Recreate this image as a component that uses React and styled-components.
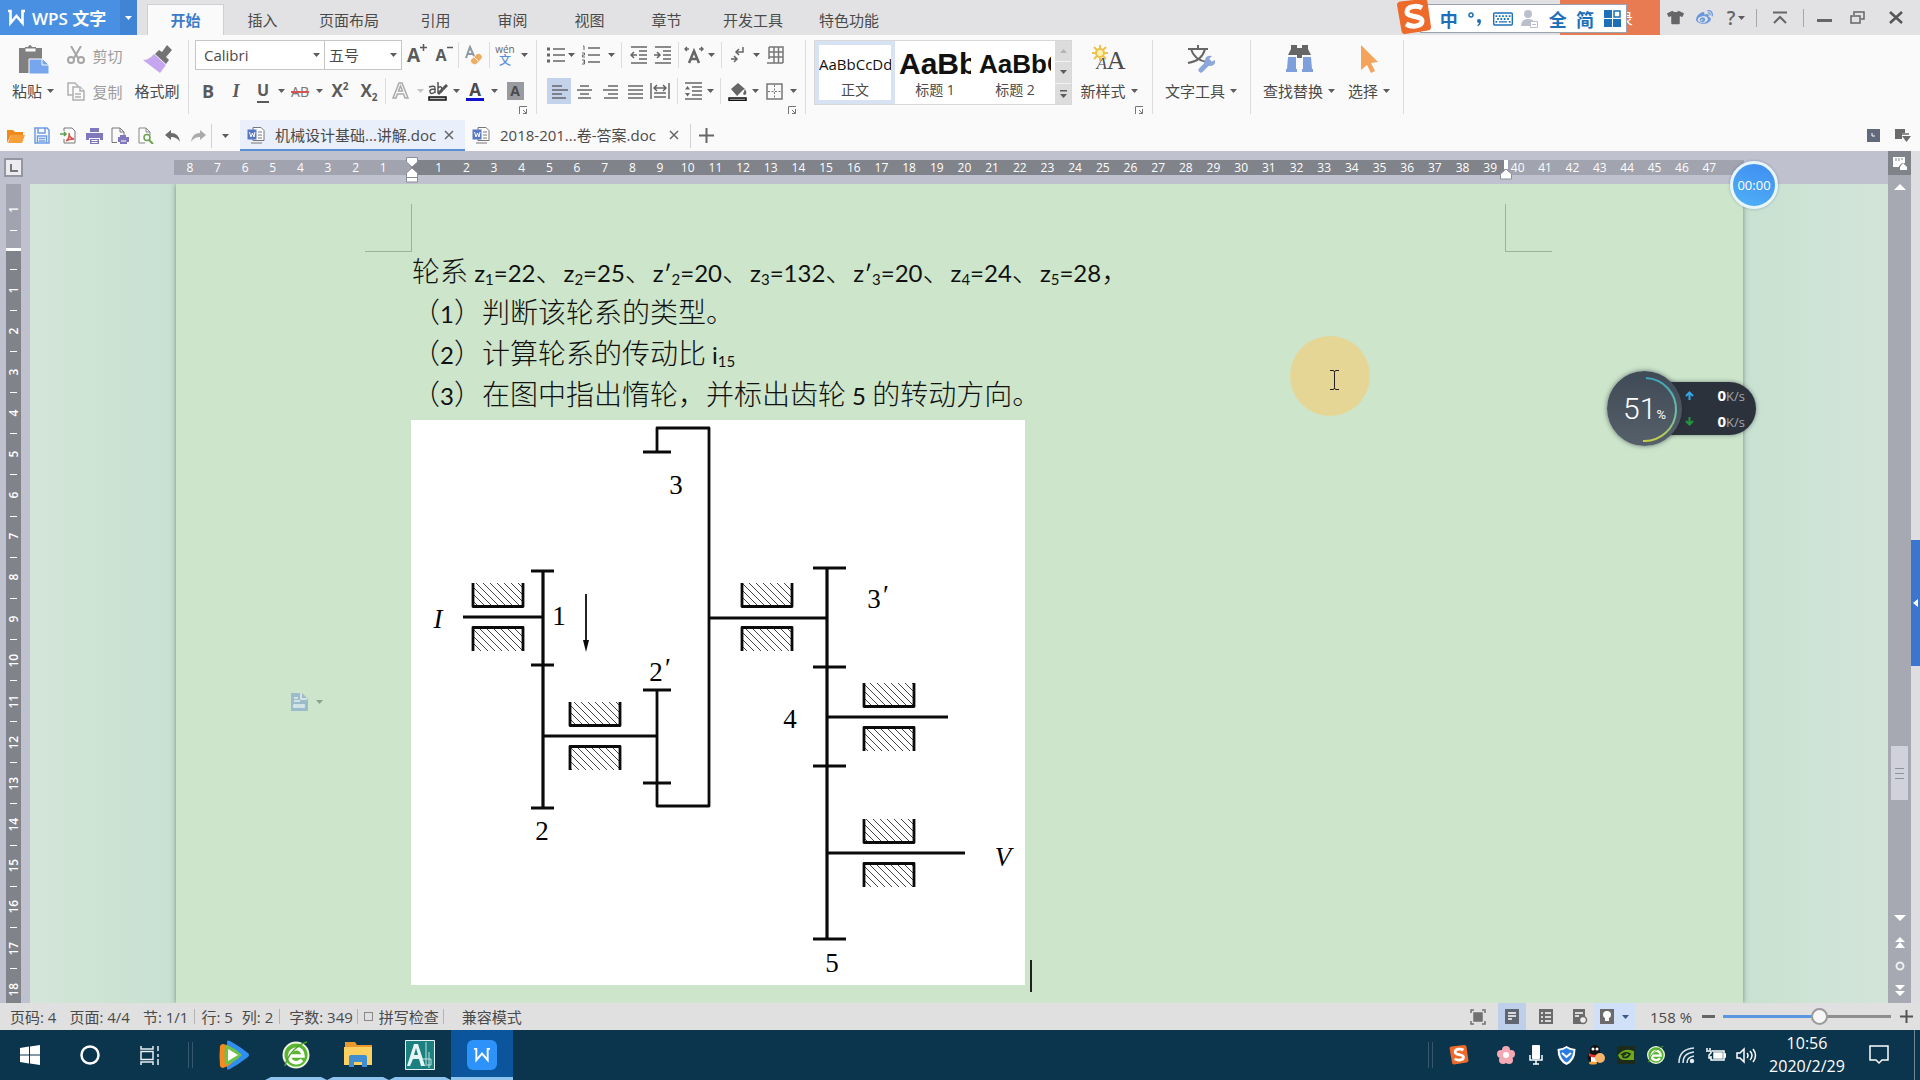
import React from "react";
import styled, { createGlobalStyle, css } from "styled-components";
import { FaTshirt, FaWeibo, FaRegKeyboard } from "react-icons/fa";

const UI_FONT = `"Open Sans", "Noto Sans CJK SC", sans-serif`;

const TABS = ["开始", "插入", "页面布局", "引用", "审阅", "视图", "章节", "开发工具", "特色功能"];

const range = (from, to) => {
  const step = from <= to ? 1 : -1;
  return Array.from({ length: Math.abs(to - from) + 1 }, (_, i) => from + i * step);
};

/* ---------- small shared drawings ---------- */

const Caret = ({ color = "#5c5c5c" }) => (
  <svg width="7" height="4" viewBox="0 0 7 4" aria-hidden="true">
    <path d="M0 0h7L3.5 4z" fill={color} />
  </svg>
);

const Launcher = () => (
  <svg width="8" height="8" viewBox="0 0 8 8" fill="none" stroke="#777" aria-hidden="true">
    <path d="M.5 8V.5H8M7.500 3v4.500H4M7.500 7.500L4 4" />
  </svg>
);

const Lines = ({ rows, width = 17, height = 15, children }) => (
  <svg width={width} height={height} viewBox={`0 0 ${width} ${height}`} fill="none" stroke="#666" strokeWidth="1.5">
    {rows.map(([x1, x2, y]) => (
      <path key={`${x1}-${y}`} d={`M${x1} ${y}H${x2}`} />
    ))}
    {children}
  </svg>
);

const WLogo = ({ size = 19, width = 2.6 }) => (
  <svg width={size} height={size} viewBox="0 0 19 19" fill="none" stroke="#fff" strokeWidth={width}>
    <path d="M1 3h2.500v12L9.500 8l6 7V3H18" />
  </svg>
);

const SogouLogo = ({ size }) => (
  <svg width={size} height={size} viewBox="0 0 36 36" aria-hidden="true">
    <path d="M1 6Q1 3 4 2.500L28 0q3 0 3.500 3L35 28q0 3-3 3.500L9 35q-3 0-3.500-3z" fill="#ee6a2b" />
    <path d="M26 9C21 6 11 7 11 13c0 6 15 3 15 9 0 5-9 7-16 3" fill="none" stroke="#fff" strokeWidth="5" />
  </svg>
);

const GreenE = ({ size }) => (
  <svg width={size} height={size} viewBox="0 0 30 30" fill="none">
    <circle cx="15" cy="15" r="12.500" fill="#5cb531" stroke="#e9f7df" strokeWidth="2" />
    <path d="M8 16h14c0-10-13-9-13.500 0 .5 8 9 8 12.500 4" stroke="#fff" strokeWidth="3.500" />
    <path d="M4 26C6 16 15 5 26 2" stroke="#4da22a" strokeWidth="1.500" />
  </svg>
);

const DocIcon = () => (
  <svg width="18" height="18" viewBox="0 0 18 18" fill="none">
    <path d="M6 1.500h8l3 3v10H6z" fill="#fff" stroke="#777" />
    <path d="M4 17h11M11 6h4M11 9h4M11 12h4" stroke="#777" />
    <rect x=".5" y="3.500" width="9" height="10" fill="#5876c4" />
    <path d="M2.500 6l1.500 5 1.500-4L7 11l1-5" stroke="#fff" />
  </svg>
);

/* ---------- title bar ---------- */

const TitleBar = () => (
  <TitleRow>
    <Brand>
      <BrandName>
        <WLogo />
        WPS 文字
      </BrandName>
      <BrandMenu aria-label="菜单">
        <Caret color="#fff" />
      </BrandMenu>
    </Brand>
    <TabList>
      {TABS.map((tab, i) => (
        <RibbonTab key={tab} $active={i === 0}>
          {tab}
        </RibbonTab>
      ))}
    </TabList>
    <SignIn>登录</SignIn>
    <WindowTools>
      <WinButton $w={30} aria-label="皮肤"><FaTshirt size={17} /></WinButton>
      <WinButton $w={28} aria-label="微博"><FaWeibo size={17} color="#6b98dc" /></WinButton>
      <WinButton $w={36} aria-label="帮助">
        <HelpMark>?</HelpMark>
        <Caret />
      </WinButton>
      <TitleDivider />
      <WinButton $w={42} aria-label="折叠功能区">
        <svg width="16" height="14" viewBox="0 0 16 14" fill="none" stroke="#666" strokeWidth="2">
          <path d="M1 1.500h14M2 12l6-6 6 6" />
        </svg>
      </WinButton>
      <TitleDivider />
      <WinButton $w={36} aria-label="最小化">
        <svg width="15" height="12" viewBox="0 0 15 12"><path d="M0 7h15v3H0z" fill="#666" /></svg>
      </WinButton>
      <WinButton $w={30} aria-label="还原">
        <svg width="15" height="14" viewBox="0 0 15 14" fill="none" stroke="#666" strokeWidth="1.500">
          <path d="M4 4V1h10v7h-3M1 5h9v7H1z" />
        </svg>
      </WinButton>
      <WinButton $w={48} aria-label="关闭">
        <svg width="14" height="13" viewBox="0 0 14 13" stroke="#555" strokeWidth="2.500">
          <path d="M1 1l12 11M13 1L1 12" />
        </svg>
      </WinButton>
    </WindowTools>
    <ImeBar>
      <ImeLogo><SogouLogo size={36} /></ImeLogo>
      <ImeKey>中</ImeKey>
      <ImeKey aria-label="标点">
        <svg width="15" height="16" viewBox="0 0 15 16">
          <circle cx="3" cy="4" r="2" fill="none" stroke="#1c70b8" strokeWidth="1.500" />
          <path d="M9 10a2 2 0 1 1 4 0q0 4-3.500 5.500v-1.500q1.500-1 1.500-2-2 0-2-2z" fill="#1c70b8" />
        </svg>
      </ImeKey>
      <ImeKey aria-label="软键盘"><FaRegKeyboard size={20} /></ImeKey>
      <ImeKey aria-label="用户">
        <svg width="18" height="19" viewBox="0 0 18 19" fill="#b9bfcb">
          <circle cx="7" cy="5" r="4" />
          <path d="M0 17q0-7 7-7 5 0 6 3v4z" />
          <path d="M9.500 12.500h7v6h-7z" fill="#fff" stroke="#b9bfcb" />
          <path d="M11 15h4v1h-4z" />
        </svg>
      </ImeKey>
      <ImeKey>全</ImeKey>
      <ImeKey>简</ImeKey>
      <ImeKey aria-label="工具箱">
        <svg width="17" height="17" viewBox="0 0 17 17" fill="#1c70b8">
          <path d="M0 0h8v8H0zM0 9h8v8H0zM9 9h8v8H9z" />
          <path d="M10 1h6v6h-6z" fill="none" stroke="#1c70b8" strokeWidth="1.500" />
        </svg>
      </ImeKey>
    </ImeBar>
  </TitleRow>
);

/* ---------- ribbon ---------- */

const MenuCaret = ({ color }) => (
  <Tool $w={12} aria-label="更多">
    <Caret color={color} />
  </Tool>
);

const ClipboardGroup = () => (
  <Group>
    <BigTool $w={58}>
      <svg width="31" height="30" viewBox="0 0 31 30">
        <path d="M1 3h6V2h3q2-4 4 0h4v1h6v25H1z" fill="#808080" />
        <path d="M7 3h11v4H7z" fill="#fafafa" stroke="#808080" />
        <path d="M11 14h14l6 6v9H11z" fill="#77a5ee" stroke="#fafafa" />
        <path d="M24 14v6h7" fill="none" stroke="#fafafa" />
      </svg>
      <ToolLabel>粘贴<Caret /></ToolLabel>
    </BigTool>
    <Stack>
      <TextTool disabled>
        <svg width="18" height="18" viewBox="0 0 18 18" fill="none" stroke="#a5a5a5" strokeWidth="2">
          <path d="M4 0l7 12M14 0L7 12" />
          <circle cx="4" cy="14" r="3" />
          <circle cx="14" cy="14" r="3" />
        </svg>
        剪切
      </TextTool>
      <TextTool disabled>
        <svg width="18" height="19" viewBox="0 0 18 19" fill="#fafafa" stroke="#b0b0b0" strokeWidth="1.500">
          <path d="M1 1h7l3 3v9H1z" />
          <path d="M6 5h7l4 4v9H6z" />
          <path d="M13 5v4h4M8 12h6M8 15h6" />
        </svg>
        复制
      </TextTool>
    </Stack>
    <BigTool $w={50}>
      <svg width="29" height="29" viewBox="0 0 29 29">
        <path d="M24 0l5 5-6 7 3 3-3 4-11-10 4-4 3 2z" fill="#737373" />
        <path d="M11 9l12 11-6 8L0 15q6 0 11-6z" fill="#c6a6ee" />
      </svg>
      <ToolLabel>格式刷</ToolLabel>
    </BigTool>
  </Group>
);

const FontGroup = () => (
  <Group $pad={6}>
    <Stack>
      <ToolRow>
        <SelectBox $w={130}>
          <select aria-label="字体" defaultValue="Calibri"><option>Calibri</option></select>
          <Caret />
        </SelectBox>
        <SelectBox $w={77} $joined>
          <select aria-label="字号" defaultValue="五号"><option>五号</option></select>
          <Caret />
        </SelectBox>
        <Tool $w={30} aria-label="增大字号">
          <Letter $size={19}>A</Letter>
          <SizeMark width="7" height="7" viewBox="0 0 7 7"><path d="M3.500 0v7M0 3.500h7" stroke="#5a5a5a" strokeWidth="1.500" /></SizeMark>
        </Tool>
        <Tool $w={24} aria-label="减小字号">
          <Letter $size={16}>A</Letter>
          <SizeMark width="6" height="7" viewBox="0 0 6 7"><path d="M0 3.500h6" stroke="#5a5a5a" strokeWidth="1.500" /></SizeMark>
        </Tool>
        <RowDivider $m={2} />
        <Tool $w={26} aria-label="清除格式">
          <svg width="18" height="20" viewBox="0 0 18 20" fill="none">
            <path d="M1 13L5 2l4 9M2 9h6" stroke="#8c9aa5" strokeWidth="2" />
            <path d="M6 15l6-6q2-1 4 1t0 4l-5 5q-2 1-4-1t-1-3z" fill="#efac62" />
            <path d="M9 12l4 4" stroke="#fff" />
          </svg>
        </Tool>
        <RowDivider $m={2} />
        <Tool $w={26} aria-label="拼音指南"><Pinyin><span>wén</span><b>文</b></Pinyin></Tool>
        <MenuCaret />
      </ToolRow>
      <ToolRow>
        <Tool $w={26}><Letter $size={18}>B</Letter></Tool>
        <Tool $w={30}><Letter $size={18} $italic>I</Letter></Tool>
        <Tool $w={24}><Letter $size={16} $underline>U</Letter></Tool>
        <MenuCaret />
        <Tool $w={26}><Strike>AB</Strike></Tool>
        <MenuCaret />
        <Tool $w={30}><Letter $size={17}>X<Sup>2</Sup></Letter></Tool>
        <Tool $w={28}><Letter $size={17}>X<Sub>2</Sub></Letter></Tool>
        <RowDivider $m={2} />
        <Tool $w={26} aria-label="文字效果">
          <svg width="18" height="18" viewBox="0 0 18 18" fill="none" stroke="#aaa" strokeWidth="1.500">
            <path d="M1 16L7 1h3l6 15h-3l-1.500-4h-6L4 16zM6.500 9h4L8.500 4z" />
          </svg>
        </Tool>
        <MenuCaret color="#c4c4c4" />
        <Tool $w={24} aria-label="突出显示">
          <svg width="20" height="20" viewBox="0 0 20 20" fill="none" stroke="#555" strokeWidth="2">
            <path d="M1 6q6-2 6 1v5M7 8q-6 0-5 3t5 0M10 1v10q5 1 4-3t-4-1" strokeWidth="1.500" />
            <path d="M19 4l-9 9" strokeWidth="3" />
            <path d="M1 16h17v3H1z" fill="#bbb" stroke="#111" strokeWidth="1.500" />
          </svg>
        </Tool>
        <MenuCaret />
        <Tool $w={26} aria-label="字体颜色"><ColorLetter>A</ColorLetter></Tool>
        <MenuCaret />
        <Tool $w={30} aria-label="字符底纹"><ShadeLetter>A</ShadeLetter></Tool>
      </ToolRow>
      <LauncherRow><Launcher /></LauncherRow>
    </Stack>
  </Group>
);

const ParagraphGroup = () => (
  <Group $pad={10}>
    <Stack>
      <ToolRow>
        <Tool $w={18} aria-label="项目符号">
          <Lines width={18} height={16} rows={[[6, 18, 2], [6, 18, 8], [6, 18, 14]]}>
            <path d="M0 2h3M0 8h3M0 14h3" strokeWidth="3" />
          </Lines>
        </Tool>
        <MenuCaret />
        <Tool $w={28} aria-label="编号">
          <Lines width={18} height={20} rows={[[6, 18, 3], [6, 18, 10], [6, 18, 17]]}>
            <path d="M1 1h1v4M0 8h2.500v2H.5v2H3M0 15h2.500v4H0M1 17h1" strokeWidth="1" />
          </Lines>
        </Tool>
        <MenuCaret />
        <RowDivider $m={4} />
        <Tool $w={24} aria-label="减少缩进">
          <Lines width={17} height={18} rows={[[1, 17, 1], [9, 17, 5], [9, 17, 9], [9, 17, 13], [1, 17, 17]]}>
            <path d="M7 9H1M4 6L1 9l3 3" />
          </Lines>
        </Tool>
        <Tool $w={24} aria-label="增加缩进">
          <Lines width={17} height={18} rows={[[1, 17, 1], [9, 17, 5], [9, 17, 9], [9, 17, 13], [1, 17, 17]]}>
            <path d="M0 9h6M3 6l3 3-3 3" />
          </Lines>
        </Tool>
        <RowDivider $m={4} />
        <Tool $w={22} aria-label="中文版式">
          <svg width="20" height="18" viewBox="0 0 20 18" fill="none" stroke="#666" strokeWidth="2">
            <path d="M5 17l5-12 5 12M7 13h6" strokeWidth="2.500" />
            <path d="M5 3H1M3 1L1 3l2 2M15 3h4M17 1l2 2-2 2" strokeWidth="1.500" />
          </svg>
        </Tool>
        <MenuCaret />
        <RowDivider $m={4} />
        <Tool $w={24} aria-label="制表位">
          <svg width="14" height="16" viewBox="0 0 14 16" fill="none" stroke="#666" strokeWidth="1.500">
            <path d="M12 0v5H6M8 2L5 5l3 3M0 12h6M3 9l3 3-3 3" />
          </svg>
        </Tool>
        <MenuCaret />
        <Tool $w={26} aria-label="表格">
          <svg width="18" height="18" viewBox="0 0 18 18" fill="none" stroke="#777" strokeWidth="1.500">
            <path d="M3 1h14v16M3 1v12M1 17h16M3 6h14M3 11h14M8 1v16M12.500 1v16" />
          </svg>
        </Tool>
      </ToolRow>
      <ToolRow>
        <Tool $w={24} $on aria-label="左对齐"><Lines rows={[[1, 11, 2], [1, 17, 6], [1, 11, 10], [1, 15, 14]]} /></Tool>
        <Tool $w={26} aria-label="居中"><Lines rows={[[4, 13, 2], [1, 16, 6], [4, 13, 10], [2, 15, 14]]} /></Tool>
        <Tool $w={26} aria-label="右对齐"><Lines rows={[[6, 16, 2], [1, 16, 6], [6, 16, 10], [2, 16, 14]]} /></Tool>
        <Tool $w={24} aria-label="两端对齐"><Lines rows={[[1, 16, 2], [1, 16, 6], [1, 16, 10], [1, 16, 14]]} /></Tool>
        <Tool $w={26} aria-label="分散对齐">
          <Lines width={20} height={16} rows={[[4, 16, 10], [4, 16, 14]]}>
            <path d="M1 0v16M19 0v16M4 5h12M7 2L4 5l3 3M13 2l3 3-3 3" />
          </Lines>
        </Tool>
        <RowDivider $m={4} />
        <Tool $w={22} aria-label="行距">
          <Lines width={18} height={18} rows={[[1, 18, 1], [8, 18, 5], [8, 18, 9], [8, 18, 13], [1, 18, 17]]}>
            <path d="M1 7.500h5L3.500 4zM1 11h5l-2.500 3.500z" fill="#666" stroke="none" />
          </Lines>
        </Tool>
        <MenuCaret />
        <RowDivider $m={4} />
        <Tool $w={24} aria-label="底纹">
          <svg width="19" height="19" viewBox="0 0 19 19">
            <path d="M3 7l7-6 7 6-2 1-6 6z" fill="#666" />
            <path d="M17 7q2 3 1 5t-3 0z" fill="#666" />
            <path d="M1 16h17v2.500H1z" fill="#bbb" stroke="#111" strokeWidth="1.500" />
          </svg>
        </Tool>
        <MenuCaret />
        <Tool $w={26} aria-label="边框">
          <svg width="17" height="17" viewBox="0 0 17 17" fill="none" stroke="#777" strokeWidth="1.500">
            <path d="M1 1h15v15H1z" />
            <path d="M8.500 2v14M2 8.500h14" strokeDasharray="2 1.500" strokeWidth="1" />
          </svg>
        </Tool>
        <MenuCaret />
      </ToolRow>
      <LauncherRow><Launcher /></LauncherRow>
    </Stack>
  </Group>
);

const StyleGroup = () => (
  <Group $pad={8}>
    <Gallery>
      <StyleItem $on>
        <Sample $size={15}>AaBbCcDd</Sample>
        <span>正文</span>
      </StyleItem>
      <StyleItem>
        <Sample $size={30} $bold>AaBb</Sample>
        <span>标题 1</span>
      </StyleItem>
      <StyleItem>
        <Sample $size={26} $bold>AaBbC</Sample>
        <span>标题 2</span>
      </StyleItem>
      <GalleryScroll>
        <button aria-label="上一行">
          <svg width="7" height="4" viewBox="0 0 7 4"><path d="M0 4h7L3.500 0z" fill="#b5b5b5" /></svg>
        </button>
        <button aria-label="下一行"><Caret /></button>
        <button aria-label="展开">
          <svg width="7" height="8" viewBox="0 0 7 8" fill="#5c5c5c"><path d="M0 0h7v1.500H0zM0 4h7L3.500 8z" /></svg>
        </button>
      </GalleryScroll>
    </Gallery>
    <Stack>
      <BigTool $w={74}>
        <NewStyle>
          <svg width="16" height="16" viewBox="0 0 16 16" stroke="#efc250" strokeWidth="2">
            <path d="M8 0v16M0 8h16M2 2l12 12M14 2L2 14" />
            <circle cx="8" cy="8" r="4" fill="#fff3b0" stroke="#efc250" />
          </svg>
          <i>A</i>
          <b>A</b>
        </NewStyle>
        <ToolLabel>新样式<Caret /></ToolLabel>
      </BigTool>
      <LauncherRow><Launcher /></LauncherRow>
    </Stack>
  </Group>
);

const Ribbon = () => (
  <RibbonRow>
    <ClipboardGroup />
    <GroupDivider />
    <FontGroup />
    <GroupDivider />
    <ParagraphGroup />
    <GroupDivider />
    <StyleGroup />
    <GroupDivider />
    <Group $pad={5}>
      <BigTool $w={86}>
        <svg width="29" height="28" viewBox="0 0 29 28" fill="none">
          <path d="M1 4h20M11 0v4M4 4q3 11 16 13M18 4Q15 16 1 18" stroke="#666" strokeWidth="2" />
          <path d="M14 25l8-8" stroke="#8aa6da" strokeWidth="5" strokeLinecap="round" />
          <path d="M25 11l-3 3 2 3 4-2q1 6-6 6t-4-6q1-5 7-4z" fill="#8aa6da" />
        </svg>
        <ToolLabel>文字工具<Caret /></ToolLabel>
      </BigTool>
    </Group>
    <GroupDivider />
    <Group $pad={6}>
      <BigTool $w={84}>
        <svg width="27" height="27" viewBox="0 0 27 27">
          <path d="M5 0h6v3h5V0h6v4l3 6H16v3h-5v-3H2l3-6z" fill="#666" />
          <path d="M2 12h8v12h1v3H0v-3h1zM17 12h8l1 12h1v3H16v-3h1z" fill="#7f9fdb" />
        </svg>
        <ToolLabel>查找替换<Caret /></ToolLabel>
      </BigTool>
      <BigTool $w={56}>
        <svg width="19" height="28" viewBox="0 0 19 28">
          <path d="M1 0l17 17-7 1 4 8-4 2-4-8-6 5z" fill="#f3a45a" />
        </svg>
        <ToolLabel>选择<Caret /></ToolLabel>
      </BigTool>
    </Group>
    <GroupDivider />
  </RibbonRow>
);

/* ---------- quick access bar with document tabs ---------- */

const QuickBar = () => (
  <QuickRow>
    <QuickTools>
      <Quick aria-label="打开">
        <svg width="18" height="14" viewBox="0 0 18 14">
          <path d="M0 14V1h6l2 2h8v3H4z" fill="#f08a1c" />
          <path d="M4 6h14l-3 8H1z" fill="#f6a03a" />
        </svg>
      </Quick>
      <Quick aria-label="保存">
        <svg width="16" height="17" viewBox="0 0 16 17" fill="none" stroke="#6e9ce4" strokeWidth="1.500">
          <path d="M1 1h12l2 2v13H1zM4 1v5h7V1M3.500 16V9h9v7M5 11.500h6M5 14h6" />
        </svg>
      </Quick>
      <Quick aria-label="输出为PDF">
        <svg width="16" height="17" viewBox="0 0 16 17" fill="none" stroke="#777">
          <path d="M4 4V1h8l3 3v12H4v-4" />
          <path d="M0 7h6M4 5l2 2-2 2" stroke="#5aa04b" strokeWidth="1.500" />
          <path d="M6 14q4-3 3-8 0 5 5 6-5 0-8 2z" stroke="#d9534f" strokeWidth="1.500" />
        </svg>
      </Quick>
      <Quick aria-label="打印">
        <svg width="17" height="16" viewBox="0 0 17 16" fill="#8078bd">
          <path d="M4 0h9v4H4zM0 5h17v7h-3v-2H3v2H0zM4 11h9v5H4z" />
          <path d="M5.500 12.500h6M5.500 14.500h6" stroke="#fff" />
        </svg>
      </Quick>
      <Quick aria-label="打印设置">
        <svg width="18" height="17" viewBox="0 0 18 17" fill="none" stroke="#777">
          <path d="M6 15.500H1V1h8l4 4v3M9 1v4h4" />
          <path d="M9 8h6v2h3v5h-2v2H9v-2H7v-5h2z" fill="#8078bd" stroke="none" />
          <path d="M10 14h5" stroke="#fff" />
        </svg>
      </Quick>
      <Quick aria-label="打印预览">
        <svg width="16" height="17" viewBox="0 0 16 17" fill="none" stroke="#888">
          <path d="M7 16H1V1h7l4 4v3M8 1v4h4" />
          <circle cx="9" cy="10.500" r="3" stroke="#6ba24f" strokeWidth="1.500" />
          <path d="M11 13l4 4" stroke="#6ba24f" strokeWidth="2" />
        </svg>
      </Quick>
      <Quick aria-label="撤销">
        <svg width="15" height="12" viewBox="0 0 15 12"><path d="M0 5l6-5v3q8 0 9 9-3-5-9-5v3z" fill="#6b6b6b" /></svg>
      </Quick>
      <Quick aria-label="恢复">
        <svg width="15" height="12" viewBox="0 0 15 12"><path d="M15 5L9 0v3Q1 3 0 12q3-5 9-5v3z" fill="#ababab" /></svg>
      </Quick>
      <QuickDivider />
      <Quick aria-label="自定义"><Caret /></Quick>
    </QuickTools>
    <DocTab $active>
      <DocIcon />
      <DocName>机械设计基础...讲解.doc</DocName>
      <CloseTab />
    </DocTab>
    <DocTab>
      <DocIcon />
      <DocName>2018-201...卷-答案.doc</DocName>
      <CloseTab />
    </DocTab>
    <QuickDivider />
    <NewTab aria-label="新建">
      <svg width="15" height="15" viewBox="0 0 15 15"><path d="M6.500 0h2v6.500H15v2H8.500V15h-2V8.500H0v-2h6.500z" fill="#666" /></svg>
    </NewTab>
    <QuickEnd>
      <svg width="13" height="13" viewBox="0 0 13 13">
        <path d="M0 0h13v13H0z" fill="#62697b" />
        <path d="M5 4v3h3" fill="none" stroke="#fff" />
      </svg>
      <svg width="16" height="14" viewBox="0 0 16 14">
        <path d="M0 0h10v4H7v6H0z" fill="#6b6b6b" />
        <path d="M7 7h9l-4.500 6z" fill="#6b6b6b" />
        <path d="M7 5h7" stroke="#6b6b6b" strokeWidth="1.500" />
      </svg>
    </QuickEnd>
  </QuickRow>
);

const CloseTab = () => (
  <CloseButton aria-label="关闭标签">
    <svg width="10" height="10" viewBox="0 0 10 10" stroke="#666" strokeWidth="1.500">
      <path d="M1 1l8 8M9 1L1 9" />
    </svg>
  </CloseButton>
);

/* ---------- rulers ---------- */

const HorizontalRuler = () => (
  <HRuler>
    <RulerSpace $flex={144} />
    <Band $flex={237}>
      <BandEdge $w={2} />
      {range(8, 1).map((n) => <Tick key={n}>{n}</Tick>)}
      <HalfTick />
    </Band>
    <Band $flex={1093} $dark>
      <IndentMark>
        <svg width="12" height="26" viewBox="0 0 12 26" fill="#fff" stroke="#8b8d97">
          <path d="M.5.500h11V5L6 10 .5 5zM6 11l5.500 5v9H.5v-9zM.5 20.500h11" />
        </svg>
      </IndentMark>
      <HalfTick />
      {range(1, 39).map((n) => <Tick key={n}>{n}</Tick>)}
    </Band>
    <Band $flex={240}>
      <RightMark>
        <svg width="12" height="20" viewBox="0 0 12 20" fill="#fff">
          <path d="M4 0h4v9H4z" />
          <path d="M6 9l5.500 5v5H.5v-5z" stroke="#8b8d97" />
        </svg>
      </RightMark>
      {range(40, 47).map((n) => <Tick key={n}>{n}</Tick>)}
      <BandEdge $w={21} />
    </Band>
    <RulerSpace $flex={144} />
  </HRuler>
);

const VerticalRuler = () => (
  <VRuler>
    <VBand $pad="16px 0 8px" $h={64}>
      <VTick>1</VTick>
      <VDash />
    </VBand>
    <VBand $dark $pad="8px 0 4px">
      {range(1, 18).map((n) => (
        <React.Fragment key={n}>
          <VDash />
          <VTick>{n}</VTick>
        </React.Fragment>
      ))}
    </VBand>
  </VRuler>
);

/* ---------- gear train drawing ---------- */

const Bearing = ({ x, y }) => (
  <g>
    <rect x={x - 25} y={y - 34} width="50" height="23" fill="url(#hatch)" stroke="none" />
    <rect x={x - 25} y={y + 11} width="50" height="23" fill="url(#hatch)" stroke="none" />
    <path d={`M${x - 25} ${y - 34}v23.500h50v-23.500M${x - 25} ${y + 34}v-23.500h50v23.500`} />
  </g>
);

const GearTrain = () => (
  <Figure viewBox="0 0 614 565" role="img" aria-label="轮系">
    <defs>
      <pattern id="hatch" width="7" height="7" patternUnits="userSpaceOnUse">
        <path d="M-1-1l9 9M-1 6l2 2M6-1l2 2" stroke="#444" strokeWidth="1" />
      </pattern>
    </defs>
    <g fill="none" stroke="#0a0a0a" strokeWidth="2.800" strokeLinejoin="round">
      <path d="M132 151v237M416 148v371" strokeWidth="3.200" />
      <path d="M120 151h23M120 245h23M120 388h23M52 197h80M132 316h114" />
      <path d="M232 270h28M232 363h28M232 32h28M246 270v116h52V8h-52v24M298 198h118" />
      <path d="M402 148h33M402 247h33M402 346h33M402 519h33M416 297h121M416 433h138" />
      <Bearing x={87} y={197} />
      <Bearing x={184} y={316} />
      <Bearing x={356} y={197} />
      <Bearing x={478} y={297} />
      <Bearing x={478} y={433} />
      <path d="M175 174v50" strokeWidth="1.800" />
      <path d="M172 220h6l-3 12z" fill="#0a0a0a" stroke="none" />
    </g>
    <g textAnchor="middle">
      <text x="265" y="74">3</text>
      <text x="27" y="208" fontStyle="italic">I</text>
      <text x="148" y="205">1</text>
      <text x="245" y="261">2</text>
      <text x="257" y="257">′</text>
      <text x="131" y="420">2</text>
      <text x="379" y="308">4</text>
      <text x="463" y="188">3</text>
      <text x="475" y="184">′</text>
      <text x="421" y="552">5</text>
      <text x="592" y="446" fontStyle="italic">V</text>
    </g>
  </Figure>
);

const Z = ({ sub, value, prime }) => (
  <Latin>
    z{prime && "′"}<LowMark>{sub}</LowMark>={value}
  </Latin>
);

const Document = () => (
  <Canvas>
    <LeftDesk />
    <Page>
      <CropLeft />
      <CropRight />
      <Body>
        <Line>
          轮系<Latin> </Latin><Z sub="1" value="22" />、<Z sub="2" value="25" />、<Z prime sub="2" value="20" />、
          <Z sub="3" value="132" />、<Z prime sub="3" value="20" />、<Z sub="4" value="24" />、<Z sub="5" value="28" />，
        </Line>
        <Line>（<Latin>1</Latin>）判断该轮系的类型。</Line>
        <Line>（<Latin>2</Latin>）计算轮系的传动比<Latin> i<LowMark>15</LowMark></Latin></Line>
        <Line>（<Latin>3</Latin>）在图中指出惰轮，并标出齿轮<Latin> 5 </Latin>的转动方向。</Line>
        <FigureRow>
          <GearTrain />
          <TextCursor />
        </FigureRow>
      </Body>
      <SmartTag aria-label="段落布局">
        <svg width="17" height="18" viewBox="0 0 17 18">
          <path d="M0 0h11l6 6v12H0z" fill="#9dbccb" />
          <path d="M10 0v6h6M3 5h4M3 8h6M3 12h10v2H3z" fill="none" stroke="#e2f0ea" strokeWidth="1.500" />
        </svg>
        <Caret color="#8aa38d" />
      </SmartTag>
      <PointerHalo>
        <svg width="9" height="20" viewBox="0 0 9 20" fill="none" stroke="#222">
          <path d="M0 .5h3q1.500 0 1.500 2v15q0 2-1.500 2H0M9 .5H6q-1.500 0-1.500 2M9 19.500H6q-1.500 0-1.500-2" />
        </svg>
      </PointerHalo>
    </Page>
    <RightDesk />
  </Canvas>
);

/* ---------- scroll bar ---------- */

const ScrollBar = () => (
  <ScrollColumn>
    <ScrollTop aria-label="标尺">
      <svg width="14" height="13" viewBox="0 0 14 13">
        <path d="M0 0h12v6H9L6 9v1H0z" fill="#fff" />
        <path d="M3 1v3M6 1v3M9 1v2" stroke="#808389" />
        <path d="M10 6l4 4v3H7v-3z" fill="#fff" />
      </svg>
    </ScrollTop>
    <ScrollStep aria-label="向上滚动">
      <svg width="12" height="6" viewBox="0 0 12 6"><path d="M0 6h12L6 0z" fill="#fff" /></svg>
    </ScrollStep>
    <TrackBefore />
    <Thumb><i /><i /><i /></Thumb>
    <TrackAfter />
    <ScrollStep aria-label="向下滚动">
      <svg width="12" height="6" viewBox="0 0 12 6"><path d="M0 0h12L6 6z" fill="#fff" /></svg>
    </ScrollStep>
    <ScrollStep aria-label="上一页">
      <svg width="10" height="11" viewBox="0 0 10 11"><path d="M0 5h10L5 0zM0 11h10L5 5z" fill="#fff" /></svg>
    </ScrollStep>
    <ScrollStep aria-label="选择浏览对象">
      <svg width="10" height="10" viewBox="0 0 10 10"><circle cx="5" cy="5" r="3.500" fill="none" stroke="#eee" strokeWidth="2" /></svg>
    </ScrollStep>
    <ScrollStep aria-label="下一页">
      <svg width="10" height="11" viewBox="0 0 10 11"><path d="M0 0h10L5 5zM0 6h10l-5 5z" fill="#fff" /></svg>
    </ScrollStep>
  </ScrollColumn>
);

/* ---------- floating widgets ---------- */

const SpeedBall = () => (
  <Speed>
    <Ball>
      <svg width="74" height="74" viewBox="0 0 74 74" fill="none">
        <defs>
          <linearGradient id="arc" x1="0" y1="0" x2="0" y2="1">
            <stop offset="0" stopColor="#3fa6b8" />
            <stop offset=".6" stopColor="#6fc2a8" />
            <stop offset="1" stopColor="#c6cf45" />
          </linearGradient>
        </defs>
        <path d="M38 6a31.500 31.500 0 0 1-3 63" stroke="url(#arc)" strokeWidth="2" />
      </svg>
      <BallValue>51<small>%</small></BallValue>
    </Ball>
    <Rates>
      <Rate>
        <svg width="9" height="9" viewBox="0 0 9 9" fill="none" stroke="#35a4ea" strokeWidth="2"><path d="M4.500 9V2M1 5l3.500-3.500L8 5" /></svg>
        <span><b>0</b>K/s</span>
      </Rate>
      <Rate>
        <svg width="9" height="9" viewBox="0 0 9 9" fill="none" stroke="#1f9a3a" strokeWidth="2"><path d="M4.500 0v7M1 4l3.500 3.500L8 4" /></svg>
        <span><b>0</b>K/s</span>
      </Rate>
    </Rates>
  </Speed>
);

/* ---------- status bar ---------- */

const StatusBar = () => (
  <StatusRow>
    <StatusText $gap={13}>页码: 4</StatusText>
    <StatusText $gap={13}>页面: 4/4</StatusText>
    <StatusText $gap={6}>节: 1/1</StatusText>
    <StatusDivider />
    <StatusText $gap={9}>行: 5</StatusText>
    <StatusText $gap={6}>列: 2</StatusText>
    <StatusDivider />
    <StatusText $lead={3} $gap={4}>字数: 349</StatusText>
    <StatusDivider />
    <SpellCheck>
      <input type="checkbox" />
      拼写检查
    </SpellCheck>
    <StatusDivider />
    <StatusText $lead={12}>兼容模式</StatusText>
    <ViewTools>
      <ViewButton $w={40} aria-label="全屏">
        <svg width="16" height="16" viewBox="0 0 16 16" fill="none" stroke="#707070" strokeWidth="1.500">
          <path d="M1 4V1h3M12 1h3v3M15 12v3h-3M4 15H1v-3" />
          <path d="M4 4h8v8H4z" fill="#707070" />
        </svg>
      </ViewButton>
      <ViewButton $w={28} $bg="#bed0e9" aria-label="页面视图">
        <svg width="14" height="15" viewBox="0 0 14 15"><path d="M0 0h14v15H0z" fill="#5f6670" /><path d="M3 4h8M3 7h8M3 10h4" stroke="#fff" strokeWidth="1.500" /></svg>
      </ViewButton>
      <ViewButton $w={40} aria-label="大纲视图">
        <svg width="14" height="15" viewBox="0 0 14 15"><path d="M0 0h14v15H0z" fill="#6b6b6b" /><path d="M2 4h2M6 4h6M2 8h2M6 8h6M2 12h2M6 12h6" stroke="#fff" strokeWidth="1.500" /></svg>
      </ViewButton>
      <ViewButton $w={28} aria-label="网页视图">
        <svg width="15" height="16" viewBox="0 0 15 16"><path d="M0 0h12v15H0z" fill="#6b6b6b" /><path d="M2 4h8M2 7h4" stroke="#fff" strokeWidth="1.500" /><circle cx="10" cy="11" r="3.500" fill="#eee" stroke="#6b6b6b" strokeWidth="1.500" /></svg>
      </ViewButton>
      <ViewButton $w={41} $bg="#cfe0f8" aria-label="护眼模式">
        <svg width="14" height="15" viewBox="0 0 14 15"><path d="M0 0h14v15H0z" fill="#6b6b6b" /><path d="M7 2q4 0 4 4 0 2-2 3v3H5V9Q3 8 3 6q0-4 4-4z" fill="#fff" /></svg>
        <Caret color="#37598c" />
      </ViewButton>
      <ZoomText htmlFor="zoom">158 %</ZoomText>
      <ZoomButton aria-label="缩小">
        <svg width="13" height="13" viewBox="0 0 13 13"><path d="M0 5h13v3H0z" fill="#666" /></svg>
      </ZoomButton>
      <ZoomSlider id="zoom" type="range" min="0" max="100" defaultValue="58" />
      <ZoomButton aria-label="放大">
        <svg width="13" height="13" viewBox="0 0 13 13"><path d="M5.500 0h2v5.500H13v2H7.500V13h-2V7.500H0v-2h5.500z" fill="#555" /></svg>
      </ZoomButton>
    </ViewTools>
  </StatusRow>
);

/* ---------- taskbar ---------- */

const TaskBar = () => (
  <TaskRow>
    <TaskButton $w={60} aria-label="开始菜单">
      <svg width="20" height="20" viewBox="0 0 20 20" fill="#fff"><path d="M0 3l9-1.500v8H0zM10 1.500L20 0v9.500H10zM0 10.500h9v8L0 17zM10 10.500h10V20l-10-1.500z" /></svg>
    </TaskButton>
    <TaskButton $w={60} aria-label="搜索">
      <svg width="20" height="20" viewBox="0 0 20 20"><circle cx="10" cy="10" r="8.500" fill="none" stroke="#fff" strokeWidth="2.500" /></svg>
    </TaskButton>
    <TaskButton $w={60} aria-label="任务视图">
      <svg width="20" height="19" viewBox="0 0 20 19" fill="none" stroke="#e8eef2" strokeWidth="1.500">
        <path d="M1 0v3h12V0M1 19v-3h12v3M1 5.500h12v8H1zM18 0v5M18 8v3M18 13v6" />
      </svg>
    </TaskButton>
    <TaskDivider $m={8} />
    <TaskButton $w={62} aria-label="腾讯视频">
      <svg width="30" height="30" viewBox="0 0 30 30">
        <path d="M8 1q1-1 3 0 9 5 18 12 2 2 0 4-9 7-18 12-2 1-3 0z" fill="#2f8ff0" />
        <path d="M1 6q1-2 3-2 6 1 9 4v15q-4 4-9 5-2 0-3-2-1-10 0-20z" fill="#f58a1f" />
        <path d="M6 5q9 2 17 10-8 8-17 10-1-10 0-20z" fill="#6cc24a" />
        <path d="M9 9l10 6-10 6z" fill="#fff" />
      </svg>
    </TaskButton>
    <TaskButton $w={62} $open aria-label="360浏览器"><GreenE size={30} /></TaskButton>
    <TaskButton $w={62} $open aria-label="文件资源管理器">
      <svg width="29" height="26" viewBox="0 0 29 26">
        <path d="M1 0h10l2 3h15v5H1z" fill="#e89a2e" />
        <path d="M0 5h28v18H0z" fill="#fbd060" />
        <path d="M5 25V15q0-2 2-2h14q2 0 2 2v10h-5v-5h-8v5z" fill="#3f8fd0" />
      </svg>
    </TaskButton>
    <TaskButton $w={62} $open aria-label="AutoCAD">
      <svg width="30" height="30" viewBox="0 0 30 30">
        <path d="M.500.500h29v29H.500z" fill="#1c7f80" stroke="#e6f5f3" />
        <path d="M2 26L9 4h4l7 22h-4l-2-7H8l-3 7zM9 15h4l-2-7z" fill="#e6f5f3" />
        <path d="M21 2v22M17 19h9v6h-6M24 12v16" stroke="#bfe6e0" fill="none" />
      </svg>
    </TaskButton>
    <TaskButton $w={62} $open $current aria-label="WPS 文字">
      <WpsTile><WLogo size={18} width={2} /></WpsTile>
    </TaskButton>
    <Tray>
      <TaskDivider $m={0} />
      <TrayIcon $w={48}><SogouLogo size={20} /></TrayIcon>
      <TrayGap />
      <TrayIcon>
        <svg width="18" height="18" viewBox="0 0 18 18" fill="#f3a9b4">
          <circle cx="9" cy="4" r="4" /><circle cx="14" cy="8" r="4" /><circle cx="12" cy="14" r="4" />
          <circle cx="6" cy="14" r="4" /><circle cx="4" cy="8" r="4" /><circle cx="9" cy="9" r="3" fill="#fff" />
        </svg>
      </TrayIcon>
      <TrayIcon>
        <svg width="14" height="20" viewBox="0 0 14 20" fill="#fff">
          <rect x="3" y="0" width="8" height="14" rx="1" />
          <path d="M1 10v5h12v-5M7 15v4M4 19h6" fill="none" stroke="#fff" strokeWidth="1.500" />
        </svg>
      </TrayIcon>
      <TrayIcon>
        <svg width="19" height="19" viewBox="0 0 19 19">
          <path d="M9.500 0q4 3 9 3 0 12-9 16Q.500 15 .500 3q5 0 9-3z" fill="#fff" />
          <path d="M9.500 2q3 2 7 2.500-1 9-7 12-6-3-7-12 4-.5 7-2.500z" fill="#2a7de0" />
          <path d="M5 7l4.500 4L14 7" fill="none" stroke="#fff" strokeWidth="2" />
        </svg>
      </TrayIcon>
      <TrayIcon>
        <svg width="19" height="20" viewBox="0 0 19 20">
          <path d="M8 0q5 0 5 7 3 4 2 8-7 6-14 0-1-4 2-8 0-7 5-7z" fill="#111" />
          <path d="M4 11q4 2 8 0v6H4z" fill="#fff" />
          <path d="M2 8q6 4 12 0v3q-6 3-12 0z" fill="#e0342c" />
          <circle cx="6" cy="4" r="1.500" fill="#fff" /><circle cx="10" cy="4" r="1.500" fill="#fff" />
          <ellipse cx="6" cy="18" rx="4" ry="1.500" fill="#f3a53a" />
          <circle cx="13" cy="13" r="5" fill="#f5b56c" />
        </svg>
      </TrayIcon>
      <TrayIcon>
        <svg width="18" height="18" viewBox="0 0 18 18" fill="none">
          <path d="M0 0h18v18H0z" fill="#1d2b1a" />
          <path d="M1 9q5-6 12-5l4 1v9H8Q2 14 1 9z" fill="#6aa81e" />
          <path d="M4 9q4-4 9-1-3 5-7 3-1-2 3-3" stroke="#1d2b1a" strokeWidth="1.500" />
        </svg>
      </TrayIcon>
      <TrayIcon><GreenE size={20} /></TrayIcon>
      <TrayIcon>
        <svg width="17" height="17" viewBox="0 0 17 17" fill="none" stroke="#dfe7ec" strokeWidth="1.500">
          <path d="M1 16Q1 2 16 1M5 16Q5 6 16 5M9 16q0-6 7-7" /><circle cx="14" cy="14" r="1.500" fill="#fff" />
        </svg>
      </TrayIcon>
      <TrayIcon>
        <svg width="20" height="14" viewBox="0 0 20 14" fill="none" stroke="#fff" strokeWidth="1.500">
          <path d="M6 3h12v9H5V8M18 6h1.500v3H18" /><path d="M8 5h8v5H8z" fill="#fff" />
          <path d="M1 0v2M4 0v2M0 3h5v2L3 7v3h2" />
        </svg>
      </TrayIcon>
      <TrayIcon>
        <svg width="21" height="17" viewBox="0 0 21 17" fill="none" stroke="#fff" strokeWidth="1.500">
          <path d="M1 6h3l4-4v13l-4-4H1zM11 6q2 2.500 0 5M14 4q4 4.500 0 9M17 2q5 6.500 0 13" />
        </svg>
      </TrayIcon>
      <Clock><span>10:56</span><span>2020/2/29</span></Clock>
      <TrayIcon $w={52}>
        <svg width="20" height="20" viewBox="0 0 20 20" fill="none" stroke="#fff" strokeWidth="1.500"><path d="M1 1h18v14h-6l-3 3-3-3H1z" /></svg>
      </TrayIcon>
      <ShowDesktop aria-label="显示桌面" />
    </Tray>
  </TaskRow>
);

const App = () => (
  <Window>
    <GlobalStyle />
    <TitleBar />
    <Ribbon />
    <QuickBar />
    <Workspace>
      <Main>
        <RulerRow>
          <CornerCell>
            <TabKind aria-label="制表符">
              <svg width="8" height="8" viewBox="0 0 8 8"><path d="M1 0v7h7" fill="none" stroke="#777" strokeWidth="2" /></svg>
            </TabKind>
          </CornerCell>
          <HorizontalRuler />
        </RulerRow>
        <DocRow>
          <VerticalRuler />
          <Document />
        </DocRow>
      </Main>
      <ScrollBar />
      <SideStrip>
        <SideTab aria-label="展开任务窗格">
          <svg width="5" height="8" viewBox="0 0 5 8"><path d="M5 0v8L0 4z" fill="#fff" /></svg>
        </SideTab>
      </SideStrip>
      <Timer>00:00</Timer>
      <SpeedBall />
    </Workspace>
    <StatusBar />
    <TaskBar />
  </Window>
);

export default App;

const GlobalStyle = createGlobalStyle`
  * { box-sizing: border-box; }
  body {
    margin: 0;
    font-family: ${UI_FONT};
    font-size: 15px;
    color: #4a4a4a;
  }
  button, select, input { font: inherit; color: inherit; margin: 0; }
  svg { flex: none; }
`;

const bareButton = css`
  display: flex;
  align-items: center;
  justify-content: center;
  flex: none;
  padding: 0;
  border: none;
  background: none;
  white-space: nowrap;
`;

const Window = styled.div`
  display: flex;
  flex-direction: column;
  min-height: 100vh;
`;

const TitleRow = styled.header`
  position: relative;
  display: flex;
  align-items: stretch;
  height: 35px;
  background: #e2e2e4;
`;

const Brand = styled.div`
  display: flex;
  width: 137px;
  background: #4a90e2;
  color: #fff;
`;

const BrandName = styled.div`
  display: flex;
  align-items: center;
  gap: 6px;
  flex: 1;
  padding-left: 7px;
  font-size: 17px;
  font-weight: 600;
  white-space: nowrap;
`;

const BrandMenu = styled.button`
  ${bareButton}
  width: 17px;
  background: #4084d6;
`;

const TabList = styled.nav`
  display: flex;
  flex: 1;
  padding: 4px 0 0 10px;
`;

const RibbonTab = styled.button`
  ${bareButton}
  min-width: 77px;
  padding: 0 17px 2px;
  border: solid ${(p) => (p.$active ? "#cfcfd2" : "transparent")};
  border-width: 1px 1px 0;
  background: ${(p) => (p.$active ? "#fafafa" : "transparent")};
  color: ${(p) => (p.$active ? "#3c7cc9" : "#4a4a4a")};
  font-weight: ${(p) => (p.$active ? 600 : 400)};
`;

const SignIn = styled.button`
  ${bareButton}
  justify-content: flex-end;
  width: 100px;
  padding-right: 27px;
  background: #e87b52;
  color: #fff;
`;

const WindowTools = styled.div`
  display: flex;
  align-items: center;
  color: #666;
`;

const WinButton = styled.button`
  ${bareButton}
  gap: 3px;
  width: ${(p) => p.$w}px;
  height: 30px;
`;

const HelpMark = styled.span`
  font-size: 19px;
  font-weight: 600;
`;

const TitleDivider = styled.i`
  width: 1px;
  height: 18px;
  margin: 0 2px;
  background: #a8a8a8;
`;

const ImeBar = styled.div`
  position: absolute;
  top: 4px;
  right: 293px;
  display: flex;
  align-items: center;
  width: 207px;
  height: 29px;
  padding: 0 0 0 14px;
  border: 1px solid #9aa1b0;
  background: #fff;
`;

const ImeLogo = styled.span`
  position: absolute;
  left: -25px;
  top: -6px;
`;

const ImeKey = styled.button`
  ${bareButton}
  flex: 1;
  color: #1c70b8;
  font-size: 18px;
  font-weight: 700;
`;

const RibbonRow = styled.div`
  display: flex;
  align-items: flex-start;
  height: 83px;
  padding: 5px 0 0 4px;
  background: #fafafa;
`;

const Group = styled.div`
  display: flex;
  padding: 0 6px 0 ${(p) => p.$pad || 0}px;
`;

const GroupDivider = styled.i`
  flex: none;
  width: 1px;
  height: 74px;
  background: #dcdcdc;
`;

const Stack = styled.div`
  display: flex;
  flex-direction: column;
  gap: 6px;
`;

const ToolRow = styled.div`
  display: flex;
  align-items: center;
  height: 30px;
`;

const LauncherRow = styled.div`
  display: flex;
  justify-content: flex-end;
  height: 8px;
  margin-top: -6px;
  padding-right: 3px;
`;

const RowDivider = styled.i`
  width: 1px;
  height: 26px;
  margin: 0 ${(p) => p.$m}px;
  background: #dcdcdc;
`;

const Tool = styled.button`
  ${bareButton}
  width: ${(p) => p.$w}px;
  height: 26px;
  background: ${(p) => (p.$on ? "#c3d3ec" : "none")};
`;

const SizeMark = styled.svg`
  align-self: flex-start;
  margin-top: 2px;
`;

const BigTool = styled.button`
  ${bareButton}
  flex-direction: column;
  justify-content: space-between;
  width: ${(p) => p.$w}px;
  height: 66px;
  padding: 5px 0 4px;
`;

const ToolLabel = styled.span`
  display: flex;
  align-items: center;
  gap: 5px;
  line-height: 22px;
`;

const TextTool = styled.button`
  ${bareButton}
  gap: 7px;
  width: 70px;
  height: 30px;
  padding-right: 4px;
  color: #9d9d9d;
`;

const SelectBox = styled.div`
  position: relative;
  display: flex;
  align-items: center;
  width: ${(p) => p.$w}px;
  height: 30px;
  border: 1px solid #c6c6c6;
  border-left-width: ${(p) => (p.$joined ? 0 : 1)}px;
  background: #fff;

  select {
    flex: 1;
    min-width: 0;
    height: 28px;
    padding: 0 18px 0 ${(p) => (p.$joined ? 4 : 8)}px;
    border: none;
    background: none;
    appearance: none;
  }

  svg {
    position: absolute;
    right: 4px;
    pointer-events: none;
  }
`;

const Letter = styled.span`
  color: #5a5a5a;
  font-size: ${(p) => p.$size}px;
  font-weight: 700;
  line-height: 22px;
  font-style: ${(p) => (p.$italic ? "italic" : "normal")};
  font-family: ${(p) => (p.$italic ? `"Liberation Serif", serif` : UI_FONT)};
  border-bottom: ${(p) => (p.$underline ? "2px solid #5a5a5a" : "none")};
`;

const Sup = styled.sup`
  font-size: 10px;
  line-height: 0;
`;

const Sub = styled.sub`
  font-size: 10px;
  line-height: 0;
`;

const Strike = styled.s`
  color: #777;
  font-size: 14px;
  text-decoration-color: #d9534f;
  text-decoration-thickness: 2px;
`;

const Pinyin = styled.span`
  display: flex;
  flex-direction: column;
  align-items: center;
  color: #666;
  font-size: 10px;
  line-height: 10px;

  b {
    color: #5d8fd6;
    font-size: 12px;
    line-height: 13px;
    font-weight: 500;
  }
`;

const ColorLetter = styled.b`
  width: 18px;
  border-bottom: 3px solid #1010d0;
  font-size: 17px;
  line-height: 16px;
`;

const ShadeLetter = styled.b`
  width: 17px;
  background: #9a9ba1;
  font-size: 14px;
  line-height: 18px;
`;

const Gallery = styled.div`
  display: flex;
  height: 65px;
  border: 1px solid #d8d8d8;
  background: #fff;
`;

const StyleItem = styled.button`
  ${bareButton}
  flex-direction: column;
  justify-content: flex-end;
  width: 80px;
  overflow: hidden;
  border: solid ${(p) => (p.$on ? "#d7e3f2" : "transparent")};
  border-width: 4px;
  font-size: 14px;
  line-height: 20px;
`;

const Sample = styled.span`
  width: 100%;
  overflow: hidden;
  color: #111;
  font-family: ${(p) => (p.$bold ? `"Liberation Sans", sans-serif` : `"Open Sans", sans-serif`)};
  font-size: ${(p) => p.$size}px;
  font-weight: ${(p) => (p.$bold ? 700 : 400)};
  line-height: 32px;
  text-align: left;
`;

const GalleryScroll = styled.div`
  display: flex;
  flex-direction: column;
  gap: 1px;
  width: 16px;
  background: #f3f3f3;

  button {
    ${bareButton}
    flex: 1;
    background: #dcdcdc;
  }
`;

const NewStyle = styled.span`
  display: flex;
  align-items: flex-end;
  height: 27px;
  font-family: "Liberation Serif", serif;

  svg {
    align-self: flex-start;
    margin-right: -12px;
  }

  i {
    font-size: 17px;
    line-height: 16px;
  }

  b {
    font-size: 26px;
    line-height: 22px;
    font-weight: 400;
  }
`;

const QuickRow = styled.div`
  display: flex;
  align-items: center;
  height: 33px;
  padding-top: 2px;
  background: #fafafa;
`;

const QuickTools = styled.div`
  display: flex;
  align-items: center;
  width: 240px;
  padding-left: 3px;
`;

const Quick = styled.button`
  ${bareButton}
  width: 26px;
  height: 26px;
`;

const QuickDivider = styled.i`
  width: 1px;
  height: 24px;
  margin-left: ${(p) => p.$gap || 0}px;
  background: #d2d2d2;
`;

const DocTab = styled.div`
  display: flex;
  align-items: center;
  width: 225px;
  height: 31px;
  padding: 0 8px 0 7px;
  border-bottom: 2px solid ${(p) => (p.$active ? "#5b90d4" : "transparent")};
  background: ${(p) => (p.$active ? "#e9f0fb" : "none")};
`;

const DocName = styled.span`
  flex: 1;
  padding-left: 10px;
  white-space: nowrap;
`;

const CloseButton = styled.button`
  ${bareButton}
  width: 16px;
  height: 16px;
`;

const NewTab = styled.button`
  ${bareButton}
  width: 31px;
`;

const QuickEnd = styled.div`
  display: flex;
  align-items: center;
  gap: 15px;
  margin-left: auto;
  padding-right: 9px;
`;

const Workspace = styled.main`
  position: relative;
  display: flex;
  flex: 1;
`;

const Main = styled.div`
  display: flex;
  flex-direction: column;
  flex: 1;
  min-width: 0;
  background: #bfc1cf;
`;

const RulerRow = styled.div`
  display: flex;
  align-items: center;
  height: 33px;
`;

const CornerCell = styled.div`
  flex: none;
  width: 30px;
  padding-left: 4px;
`;

const TabKind = styled.button`
  ${bareButton}
  width: 19px;
  height: 19px;
  border: 2px solid #9496a0;
  background: #ececf0;
`;

const HRuler = styled.div`
  display: flex;
  flex: 1;
  height: 15px;
`;

const RulerSpace = styled.div`
  flex: ${(p) => p.$flex} 1 0;
`;

const Band = styled.div`
  position: relative;
  display: flex;
  flex: ${(p) => p.$flex} 1 0;
  min-width: 0;
  background: ${(p) => (p.$dark ? "#808389" : "#a1a3ae")};
`;

const BandEdge = styled.span`
  flex: none;
  width: ${(p) => p.$w}px;
`;

const Tick = styled.span`
  flex: 2 1 0;
  min-width: 0;
  color: #fff;
  font-size: 12px;
  line-height: 15px;
  text-align: center;
`;

const HalfTick = styled.span`
  flex: 1 1 0;
`;

const IndentMark = styled.span`
  position: absolute;
  left: -5px;
  top: -3px;
  line-height: 0;
`;

const RightMark = styled.span`
  position: absolute;
  left: -4px;
  top: 0;
  line-height: 0;
`;

const DocRow = styled.div`
  display: flex;
  flex: 1;
`;

const VRuler = styled.div`
  display: flex;
  flex-direction: column;
  gap: 3px;
  width: 15px;
  margin: 0 9px 0 6px;
  background: #fff;
`;

const VBand = styled.div`
  display: flex;
  flex-direction: column;
  flex: ${(p) => (p.$h ? `0 0 ${p.$h}px` : "1")};
  padding: ${(p) => p.$pad};
  background: ${(p) => (p.$dark ? "#808389" : "#a1a3ae")};
`;

const VTick = styled.span`
  display: flex;
  align-items: center;
  justify-content: center;
  flex: 1;
  min-height: 0;
  color: #fff;
  font-size: 12px;
  font-weight: 600;
  line-height: 15px;
  writing-mode: vertical-rl;
  transform: rotate(180deg);
`;

const VDash = styled.i`
  display: flex;
  align-items: center;
  justify-content: center;
  flex: 1;

  &::after {
    content: "";
    width: 7px;
    height: 1px;
    background: #fff;
  }
`;

const Canvas = styled.div`
  display: flex;
  flex: 1;
  min-width: 0;
  overflow: hidden;
  background: #cfe4d6;
`;

const LeftDesk = styled.div`
  flex: 146 1 0;
  background: linear-gradient(to right, #d5e4da, #cfe4d5 30%, #c7e1d1);
`;

const RightDesk = styled.div`
  flex: 145 1 0;
  background: linear-gradient(to right, #c8e1d0, #cfe4d6 60%, #d3e3d9);
`;

const Page = styled.article`
  position: relative;
  z-index: 1;
  display: grid;
  grid-template-columns: 236fr 1093fr 238fr;
  grid-template-rows: 68px 1fr;
  flex: 1567 1 0;
  min-width: 0;
  background: #cde5cb;
  box-shadow: 0 0 5px rgba(60, 80, 70, 0.6);
`;

const crop = css`
  align-self: end;
  width: 47px;
  height: 48px;
  border: 0 solid #9fb09f;
  border-bottom-width: 1px;
`;

const CropLeft = styled.i`
  ${crop}
  grid-column: 1;
  justify-self: end;
  border-right-width: 1px;
`;

const CropRight = styled.i`
  ${crop}
  grid-column: 3;
  border-left-width: 1px;
`;

const Body = styled.section`
  grid-column: 2;
  grid-row: 2;
  min-width: 0;
  margin-top: -2px;
`;

const Line = styled.p`
  margin: 0;
  color: #111;
  font-family: "Noto Sans CJK SC", sans-serif;
  font-size: 28px;
  font-weight: 300;
  line-height: 41px;
  white-space: nowrap;
`;

const Latin = styled.span`
  font-family: Lato, "Open Sans", sans-serif;
  font-size: 24px;
  font-weight: 400;
  line-height: 0;
  white-space: pre-wrap;
`;

const LowMark = styled.sub`
  font-size: 15px;
  line-height: 0;
  vertical-align: -3px;
`;

const FigureRow = styled.div`
  display: flex;
  align-items: flex-end;
  gap: 5px;
  margin: 6px 0 0 -1px;
`;

const Figure = styled.svg`
  width: 614px;
  height: 565px;
  background: #fff;
  font-family: "Liberation Serif", serif;
  font-size: 27px;
`;

const TextCursor = styled.i`
  width: 2px;
  height: 32px;
  margin-bottom: -7px;
  background: #222;
`;

const SmartTag = styled.button`
  ${bareButton}
  position: absolute;
  left: 115px;
  top: 509px;
  gap: 8px;
`;

const PointerHalo = styled.div`
  position: absolute;
  left: 1114px;
  top: 152px;
  display: flex;
  align-items: center;
  justify-content: center;
  width: 80px;
  height: 80px;
  padding: 8px 0 0 8px;
  border-radius: 50%;
  background: #e6d695;
`;

const ScrollColumn = styled.div`
  display: flex;
  flex-direction: column;
  align-items: center;
  width: 23px;
  padding-bottom: 1px;
  background: #a6a8b2;
`;

const ScrollTop = styled.button`
  ${bareButton}
  width: 23px;
  height: 24px;
  background: #808389;
`;

const ScrollStep = styled.button`
  ${bareButton}
  width: 23px;
  height: 24px;
`;

const TrackBefore = styled.i`
  flex: 547 1 0;
`;

const TrackAfter = styled.i`
  flex: 106 1 0;
`;

const Thumb = styled.div`
  display: flex;
  flex-direction: column;
  align-items: center;
  justify-content: center;
  gap: 4px;
  width: 17px;
  height: 54px;
  background: #d0d1db;

  i {
    width: 9px;
    height: 1px;
    background: #8f919b;
  }
`;

const SideStrip = styled.aside`
  width: 9px;
  padding-top: 389px;
  background: #dedee2;
`;

const SideTab = styled.button`
  ${bareButton}
  width: 9px;
  height: 126px;
  background: #3a76cf;
`;

const Timer = styled.div`
  position: absolute;
  z-index: 2;
  top: 10px;
  right: 142px;
  display: flex;
  align-items: center;
  justify-content: center;
  width: 48px;
  height: 48px;
  border: 3px solid #e8f6fc;
  border-radius: 50%;
  background: linear-gradient(200deg, #3f8df0, #4fb1f7);
  box-shadow: 0 0 3px rgba(40, 80, 120, 0.4);
  color: #fff;
  font-size: 13px;
`;

const Speed = styled.div`
  position: absolute;
  z-index: 2;
  top: 220px;
  right: 164px;
  display: flex;
  align-items: center;
`;

const Ball = styled.div`
  position: relative;
  z-index: 1;
  display: grid;
  place-items: center;
  width: 75px;
  height: 75px;
  border-radius: 50%;
  background: linear-gradient(#3f4a56, #55606a);
  box-shadow: 0 0 5px rgba(30, 40, 50, 0.6);

  > * {
    grid-area: 1 / 1;
  }
`;

const BallValue = styled.span`
  color: #fff;
  font-family: Roboto, sans-serif;
  font-size: 30px;
  font-weight: 300;

  small {
    font-size: 13px;
    font-weight: 400;
  }
`;

const Rates = styled.div`
  display: flex;
  flex-direction: column;
  justify-content: space-around;
  width: 108px;
  height: 53px;
  margin-left: -34px;
  padding: 0 11px 0 37px;
  border-radius: 0 27px 27px 0;
  background: #2c323c;
  box-shadow: 0 0 4px rgba(30, 40, 50, 0.5);
`;

const Rate = styled.div`
  display: flex;
  align-items: center;
  justify-content: space-between;
  color: #a4a8ae;
  font-size: 13px;
  line-height: 20px;

  b {
    color: #fff;
    font-size: 15px;
  }
`;

const StatusRow = styled.footer`
  display: flex;
  align-items: center;
  height: 27px;
  padding-left: 10px;
  background: #e0e0e1;
  white-space: nowrap;
`;

const StatusText = styled.span`
  margin: 0 ${(p) => p.$gap || 0}px 0 ${(p) => p.$lead || 0}px;
  font-size: 15px;
`;

const StatusDivider = styled.i`
  width: 1px;
  height: 15px;
  margin-right: 6px;
  background: #b4b4b4;
`;

const SpellCheck = styled.label`
  display: flex;
  align-items: center;
  gap: 6px;
  margin-right: 4px;

  input {
    width: 9px;
    height: 9px;
    border: 1px solid #888;
    appearance: none;
  }
`;

const ViewTools = styled.div`
  display: flex;
  align-items: center;
  align-self: stretch;
  margin-left: auto;
  padding-right: 3px;
`;

const ViewButton = styled.button`
  ${bareButton}
  gap: 8px;
  align-self: stretch;
  width: ${(p) => p.$w}px;
  background: ${(p) => p.$bg || "none"};
`;

const ZoomText = styled.label`
  width: 62px;
  padding-left: 15px;
`;

const ZoomButton = styled.button`
  ${bareButton}
  width: 22px;
`;

const ZoomSlider = styled.input`
  width: 168px;
  height: 20px;
  margin: 0 4px;
  background: none;
  appearance: none;

  &::-webkit-slider-runnable-track {
    height: 3px;
    background: linear-gradient(to right, #5b96e0 56%, #8e8e8e 56%);
  }

  &::-webkit-slider-thumb {
    width: 17px;
    height: 17px;
    margin-top: -7px;
    border: 2px solid #9a9a9a;
    border-radius: 50%;
    background: #f6f6f6;
    appearance: none;
  }
`;

const TaskRow = styled.div`
  display: flex;
  align-items: center;
  height: 50px;
  background: #0b344d;
  color: #fff;
`;

const TaskButton = styled.button`
  ${bareButton}
  width: ${(p) => p.$w}px;
  height: 50px;
  padding-top: ${(p) => (p.$open ? 3 : 0)}px;
  border-bottom: ${(p) => (p.$open ? "3px solid #8fc4ee" : "none")};
  border-left: ${(p) => (p.$open && !p.$current ? "6px solid #0b344d" : "none")};
  border-right: ${(p) => (p.$open && !p.$current ? "6px solid #0b344d" : "none")};
  background: ${(p) => (p.$current ? "#0a559c" : "none")};
`;

const WpsTile = styled.span`
  display: flex;
  align-items: center;
  justify-content: center;
  width: 30px;
  height: 30px;
  border-radius: 6px;
  background: #2d93fa;
`;

const TaskDivider = styled.i`
  width: 5px;
  height: 26px;
  margin: 0 ${(p) => p.$m + 2}px 0 ${(p) => p.$m}px;
  border: solid #35586f;
  border-width: 0 1px;
`;

const Tray = styled.div`
  display: flex;
  align-items: center;
  margin-left: auto;
`;

const TrayIcon = styled.button`
  ${bareButton}
  width: ${(p) => p.$w || 30}px;
  height: 50px;
`;

const TrayGap = styled.span`
  width: 8px;
`;

const Clock = styled.div`
  display: flex;
  flex-direction: column;
  align-items: center;
  width: 92px;
  font-size: 16px;
  line-height: 23px;
`;

const ShowDesktop = styled.button`
  ${bareButton}
  width: 6px;
  height: 50px;
  margin-left: 9px;
  border-left: 1px solid #6d8797;
`;
